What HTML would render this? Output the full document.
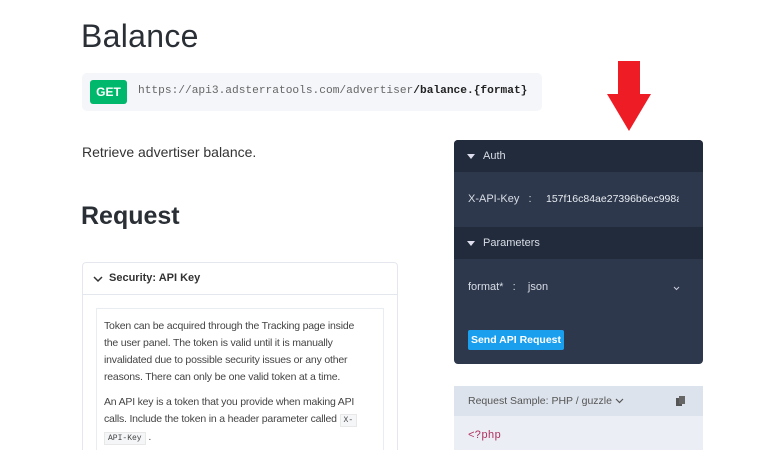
<!DOCTYPE html>
<html><head><meta charset="utf-8"><style>
*{margin:0;padding:0;box-sizing:border-box}
html,body{width:780px;height:450px;overflow:hidden}
body{background:#fff;font-family:"Liberation Sans",sans-serif;color:#333;position:relative}
.a{position:absolute}
h1{position:absolute;left:81px;top:18px;font-size:32px;font-weight:normal;color:#2a2f36;letter-spacing:0.3px}
h2{position:absolute;left:81px;top:202px;font-size:25px;font-weight:bold;color:#2a2f36}
.mono{font-family:"Liberation Mono",monospace}
</style></head><body>
<h1>Balance</h1>
<div class="a" style="left:82px;top:73px;width:460px;height:38px;background:#f4f6f9;border-radius:5px"></div>
<div class="a" style="left:90px;top:80px;width:37px;height:24px;background:#00b86b;border-radius:3px;color:#fff;font-weight:bold;font-size:12px;text-align:center;line-height:24px">GET</div>
<div class="a mono" style="left:138px;top:85px;font-size:11.2px;color:#666;white-space:nowrap">https://api3.adsterratools.com/advertiser<b style="color:#222">/balance.{format}</b></div>
<div class="a" style="left:82px;top:144px;font-size:14px;color:#333">Retrieve advertiser balance.</div>
<h2>Request</h2>
<div class="a" style="left:82px;top:262px;width:316px;height:200px;border:1px solid #e4e8ee;border-radius:4px"></div>
<div class="a" style="left:82px;top:294px;width:316px;height:1px;background:#e4e8ee"></div>
<svg class="a" style="left:93px;top:275px" width="10" height="8"><path d="M1 2l4 4 4-4" stroke="#333" stroke-width="1.5" fill="none"/></svg>
<div class="a" style="left:109px;top:272px;font-size:11px;font-weight:bold;color:#333">Security: API Key</div>
<div class="a" style="left:96px;top:308px;width:288px;height:160px;border:1px solid #e9edf2"></div>
<div class="a" style="left:104px;top:318px;width:260px;font-size:10.5px;letter-spacing:-0.2px;line-height:17px;color:#444">Token can be acquired through the Tracking page inside the user panel. The token is valid until it is manually invalidated due to possible security issues or any other reasons. There can only be one valid token at a time.<div style="margin-top:8px">An API key is a token that you provide when making API calls. Include the token in a header parameter called <span class="mono" style="font-size:8px;letter-spacing:0;background:#f4f6f8;border:1px solid #e8e8e8;padding:1px 3px">X-</span><br><span class="mono" style="font-size:8px;letter-spacing:0;background:#f4f6f8;border:1px solid #e8e8e8;padding:1px 3px">API-Key</span> .</div></div>
<div class="a" style="left:618px;top:61px;width:22px;height:35px;background:#ee1c25"></div>
<svg class="a" style="left:607px;top:94px" width="44" height="38"><path d="M0 0H44L22 37Z" fill="#ee1c25"/></svg>
<div class="a" style="left:454px;top:140px;width:249px;height:224px;background:#2d384c;border-radius:4px;overflow:hidden">
<div style="height:32px;background:#222b3b"></div>
<div style="height:55px"></div>
<div style="height:32px;background:#222b3b"></div>
</div>
<svg class="a" style="left:467px;top:154px" width="8" height="5"><path d="M0 0H8L4 5Z" fill="#dde"/></svg>
<div class="a" style="left:483px;top:150px;font-size:11px;color:#d8dde6">Auth</div>
<div class="a" style="left:468px;top:193px;font-size:11px;color:#d8dde6">X-API-Key &nbsp; :</div>
<div class="a" style="left:546px;top:193px;width:133px;overflow:hidden;white-space:nowrap;font-size:10.5px;color:#e8ecf2">157f16c84ae27396b6ec998a</div>
<svg class="a" style="left:467px;top:241px" width="8" height="5"><path d="M0 0H8L4 5Z" fill="#dde"/></svg>
<div class="a" style="left:483px;top:237px;font-size:11px;color:#d8dde6">Parameters</div>
<div class="a" style="left:468px;top:281px;font-size:11px;color:#d8dde6">format* &nbsp; : &nbsp; &nbsp;json</div>
<svg class="a" style="left:673px;top:286px" width="7" height="5"><path d="M1 1l2.5 2.5L6 1" stroke="#ccd" stroke-width="1" fill="none"/></svg>
<div class="a" style="left:468px;top:330px;width:96px;height:20px;background:#1a9fef;border-radius:2px;color:#fff;font-size:10.5px;font-weight:bold;text-align:center;line-height:20px">Send API Request</div>
<div class="a" style="left:454px;top:386px;width:249px;height:64px;background:#ebeef4"></div>
<div class="a" style="left:454px;top:386px;width:249px;height:30px;background:#dde3ec"></div>
<div class="a" style="left:468px;top:395px;font-size:10.5px;color:#555">Request Sample: PHP / guzzle</div>
<svg class="a" style="left:615px;top:398px" width="9" height="6"><path d="M1 1l3.5 3.5L8 1" stroke="#555" stroke-width="1.2" fill="none"/></svg>
<svg class="a" style="left:676px;top:396px" width="10" height="10"><rect x="0" y="2" width="6" height="8" fill="#555"/><rect x="3" y="0" width="6" height="8" fill="#666"/></svg>
<div class="a mono" style="left:468px;top:430px;font-size:11px;color:#b03060">&lt;?php</div>
</body></html>
